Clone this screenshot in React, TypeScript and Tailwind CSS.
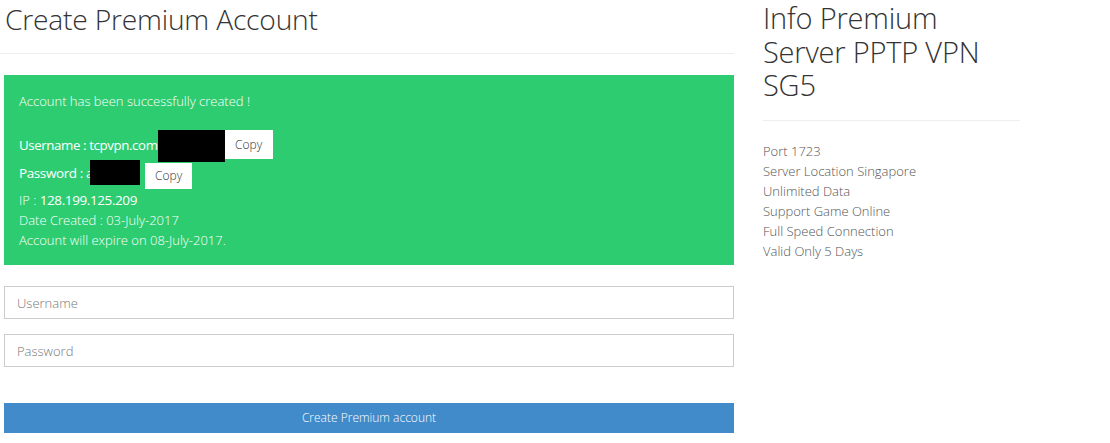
import React from "react";

export default function App() {
  const font = { fontFamily: '"Open Sans", "Noto Sans", sans-serif' };
  return (
    <div className="w-[1110px] h-[443px] bg-white overflow-hidden" style={font}>
      <div className="flex">
        <div className="w-[734px] flex flex-col">
          <h1 className="pl-[5px] pt-px text-[28.2px] leading-[36px] font-light text-[#333] tracking-[-0.2px]">
            Create Premium Account
          </h1>
          <div className="mt-[16px] h-px bg-[#eee]" />
          <div className="ml-[4px] mt-[21px] h-[190px] bg-[#2ecc71] text-white text-[13px] pl-[15px] pt-[16px] font-light">
            <div className="leading-[20px]">Account has been successfully created !</div>
            <div className="mt-[19px] flex items-start h-[30px]">
              <span className="font-normal text-[13.3px] leading-[30px] tracking-[-0.4px]">Username : tcpvpn.com</span>
              <span className="w-[67px] h-[32px] bg-black" />
              <span className="w-[48px] h-[29px] bg-white text-[#333] text-[12px] font-light flex items-center justify-center">Copy</span>
            </div>
            <div className="flex items-start h-[30px]">
              <span className="font-normal text-[13.5px] leading-[26px] tracking-[-0.4px]">Password : a</span>
              <span className="w-[50px] h-[25px] bg-black -ml-[3px]" />
              <span className="ml-[5px] mt-[3px] w-[47px] h-[26px] bg-white text-[#333] text-[12px] font-light flex items-center justify-center">Copy</span>
            </div>
            <div className="leading-[20px]">
              IP : <span className="font-normal text-[13.5px] tracking-[-0.4px]">128.199.125.209</span>
            </div>
            <div className="leading-[20px]">Date Created : 03-July-2017</div>
            <div className="leading-[20px]">Account will expire on 08-July-2017.</div>
          </div>
          <div className="ml-[4px] mt-[21px] h-[33px] border border-[#ccc] flex items-center pl-[12px] pt-[2px] text-[13px] font-light text-[#777]">
            Username
          </div>
          <div className="ml-[4px] mt-[15px] h-[33px] border border-[#ccc] flex items-center pl-[12px] pt-[2px] text-[13px] font-light text-[#777]">
            Password
          </div>
          <div className="ml-[4px] mt-[36px] h-[30px] bg-[#428bca] flex items-center justify-center text-white text-[12px] font-light">
            Create Premium account
          </div>
        </div>
        <div className="ml-[29px] w-[257px] flex flex-col">
          <h2 className="pt-px text-[29px] leading-[33.5px] font-light text-[#333] tracking-[-0.2px] w-[230px]">
            Info Premium Server PPTP VPN SG5
          </h2>
          <div className="mt-[18px] h-px bg-[#eee]" />
          <div className="mt-[20px] text-[13px] leading-[20px] font-light text-[#555]">
            <div>Port 1723</div>
            <div>Server Location Singapore</div>
            <div>Unlimited Data</div>
            <div>Support Game Online</div>
            <div>Full Speed Connection</div>
            <div>Valid Only 5 Days</div>
          </div>
        </div>
      </div>
    </div>
  );
}
